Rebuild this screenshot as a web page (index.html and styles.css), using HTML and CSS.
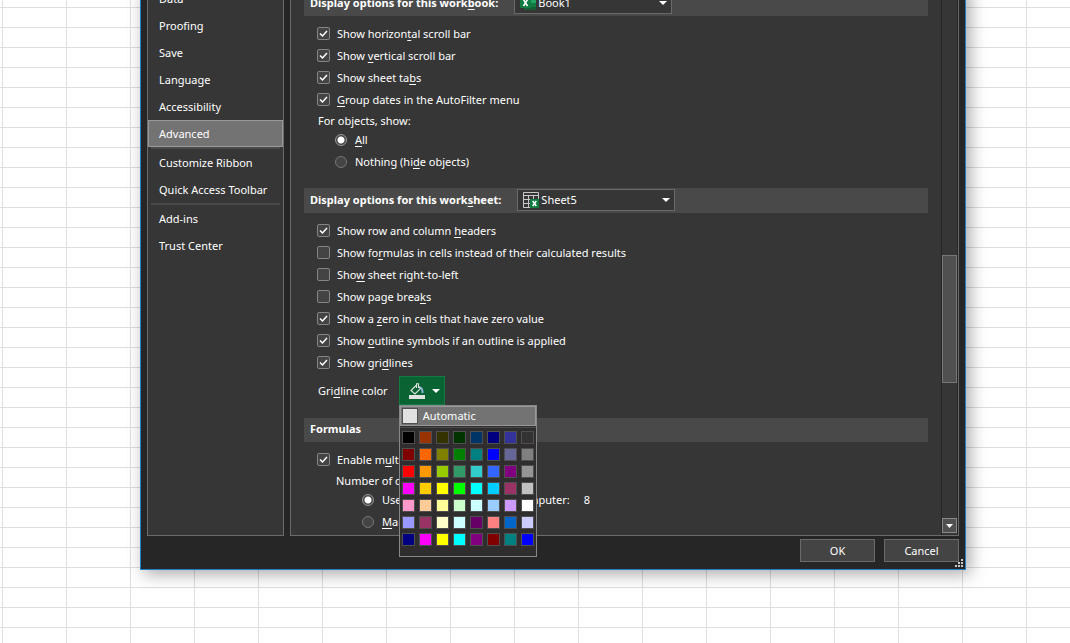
FILE: index.html
```
<!DOCTYPE html>
<html lang="en">
<head>
<meta charset="utf-8">
<title>Excel Options</title>
<link rel="stylesheet" href="styles.css">
</head>
<body class="sheet">
<div class="dialog" role="dialog" aria-label="Excel Options">
  <div class="panes">
    <nav class="nav" aria-label="Categories">
      <button class="nav-item" type="button">Data</button>
      <button class="nav-item" type="button">Proofing</button>
      <button class="nav-item" type="button">Save</button>
      <button class="nav-item" type="button">Language</button>
      <button class="nav-item" type="button">Accessibility</button>
      <button class="nav-item nav-item-active" type="button" aria-current="page">Advanced</button>
      <hr class="nav-line">
      <button class="nav-item" type="button">Customize Ribbon</button>
      <button class="nav-item" type="button">Quick Access Toolbar</button>
      <hr class="nav-line">
      <button class="nav-item" type="button">Add-ins</button>
      <button class="nav-item" type="button">Trust Center</button>
    </nav>

    <main class="pane">
      <div class="content">
        <section class="group">
          <div class="band">
            <label class="band-title" for="book">Display options for this work<u>b</u>ook:</label>
            <div class="picker">
              <select class="picker-select" id="book"><option>Book1</option></select>
              <svg class="picker-icon" width="16" height="16" viewBox="0 0 16 16" aria-hidden="true">
                <rect x="4" y="1" width="12" height="14" fill="#21a366"/>
                <rect x="10" y="8" width="6" height="4" fill="#107c41"/>
                <rect x="4" y="12" width="12" height="3" fill="#185c37"/>
                <rect x="0" y="2" width="11" height="11" fill="#107c41"/>
                <path d="M3.500 4.500L7.500 11M7.500 4.500L3.500 11" stroke="#fff" stroke-width="1.600"/>
              </svg>
              <svg class="picker-arrow" width="8" height="4" viewBox="0 0 8 4" aria-hidden="true"><path d="M0 0H8L4 4Z" fill="#fff"/></svg>
            </div>
          </div>
          <div class="rows">
            <label class="row"><input class="check" type="checkbox" checked><span>Show horizon<u>t</u>al scroll bar</span></label>
            <label class="row"><input class="check" type="checkbox" checked><span>Show <u>v</u>ertical scroll bar</span></label>
            <label class="row"><input class="check" type="checkbox" checked><span>Show sheet ta<u>b</u>s</span></label>
            <label class="row"><input class="check" type="checkbox" checked><span><u>G</u>roup dates in the AutoFilter menu</span></label>
            <div class="caption">For objects, show:</div>
            <label class="row row-radio"><input class="radio" type="radio" name="objects" checked><span><u>A</u>ll</span></label>
            <label class="row row-radio"><input class="radio" type="radio" name="objects"><span>Nothing (hi<u>d</u>e objects)</span></label>
          </div>
        </section>

        <section class="group">
          <div class="band">
            <label class="band-title" for="worksheet">Display options for this work<u>s</u>heet:</label>
            <div class="picker">
              <select class="picker-select" id="worksheet"><option>Sheet5</option></select>
              <svg class="picker-icon" width="16" height="16" viewBox="0 0 16 16" aria-hidden="true">
                <path d="M.5.5H15.500V7M7 15.500H.5V.5M0 3.500H16M0 7.500H7M0 11.500H7M5.500 3V16M10.500 3V7" fill="none" stroke="#c8c8c8"/>
                <rect x="7" y="7" width="9" height="9" fill="#107c41"/>
                <path d="M9.700 9L13.300 14M13.300 9L9.700 14" stroke="#fff" stroke-width="1.500"/>
              </svg>
              <svg class="picker-arrow" width="8" height="4" viewBox="0 0 8 4" aria-hidden="true"><path d="M0 0H8L4 4Z" fill="#fff"/></svg>
            </div>
          </div>
          <div class="rows">
            <label class="row"><input class="check" type="checkbox" checked><span>Show row and column <u>h</u>eaders</span></label>
            <label class="row"><input class="check" type="checkbox"><span>Show fo<u>r</u>mulas in cells instead of their calculated results</span></label>
            <label class="row"><input class="check" type="checkbox"><span>Sho<u>w</u> sheet right-to-left</span></label>
            <label class="row"><input class="check" type="checkbox"><span>Show page brea<u>k</u>s</span></label>
            <label class="row"><input class="check" type="checkbox" checked><span>Show a <u>z</u>ero in cells that have zero value</span></label>
            <label class="row"><input class="check" type="checkbox" checked><span>Show <u>o</u>utline symbols if an outline is applied</span></label>
            <label class="row"><input class="check" type="checkbox" checked><span>Show gri<u>d</u>lines</span></label>
          </div>
          <div class="color-row">
            <label class="color-label" for="color">Gri<u>d</u>line color</label>
            <div class="color-anchor">
              <button class="color-button" id="color" type="button" aria-expanded="true">
                <svg width="16" height="16" viewBox="0 0 16 16" aria-hidden="true">
                  <path d="M7.500 5V.8H9.500V5M7 2.500L2 7.500L6 11L11.500 5.500L9.500 3" fill="none" stroke="#e1e1e1" stroke-width="1.100"/>
                  <path d="M10.500 3.500Q14.800 3.500 14.500 10H12.500Q13 7 11.500 5.500Z" fill="#8fb8dc"/>
                  <rect x="0" y="12" width="16" height="4" fill="#e1e1e1"/>
                </svg>
                <svg width="8" height="4" viewBox="0 0 8 4" aria-hidden="true"><path d="M0 0H8L4 4Z" fill="#fff"/></svg>
              </button>
              <div class="popup">
                <button class="auto" type="button"><span class="auto-chip"></span>Automatic</button>
                <hr class="popup-line">
                <div class="swatches" id="swatches"></div>
              </div>
            </div>
          </div>
        </section>

        <section class="group">
          <h2 class="band band-short band-title">Formulas</h2>
          <div class="rows">
            <label class="row"><input class="check" type="checkbox" checked><span>Enable m<u>u</u>lti-threaded calculation</span></label>
            <div class="caption caption-inner">Number of calculation threads</div>
            <label class="row row-inner"><input class="radio" type="radio" name="threads" checked><span>Use all <u>p</u>rocessors on this computer:</span><span class="count">8</span></label>
            <label class="row row-inner"><input class="radio" type="radio" name="threads"><span><u>M</u>anual</span></label>
          </div>
        </section>
      </div>

      <div class="scroll">
        <div class="thumb"></div>
        <button class="scroll-down" type="button" aria-label="Scroll down"><svg width="7" height="4" viewBox="0 0 7 4" aria-hidden="true"><path d="M0 0H7L3.500 4Z" fill="#fff"/></svg></button>
      </div>
    </main>
  </div>

  <footer class="footer">
    <button class="push" type="button">OK</button>
    <button class="push" type="button">Cancel</button>
  </footer>
  <svg class="grip" width="8" height="8" viewBox="0 0 8 8" aria-hidden="true"><path d="M6 0h2v2h-2zM3 3h2v2h-2zM6 3h2v2h-2zM0 6h2v2h-2zM3 6h2v2h-2zM6 6h2v2h-2z" fill="#c8c8c8"/></svg>
</div>
<script src="swatches.js"></script>
</body>
</html>
```

FILE: swatches.js
```
const colors = [
  "#000000", "#993300", "#333300", "#003300", "#003366", "#000080", "#333399", "#333333",
  "#800000", "#ff6600", "#808000", "#008000", "#008080", "#0000ff", "#666699", "#808080",
  "#ff0000", "#ff9900", "#99cc00", "#339966", "#33cccc", "#3366ff", "#800080", "#969696",
  "#ff00ff", "#ffcc00", "#ffff00", "#00ff00", "#00ffff", "#00ccff", "#993366", "#c0c0c0",
  "#ff99cc", "#ffcc99", "#ffff99", "#ccffcc", "#ccffff", "#99ccff", "#cc99ff", "#ffffff",
  "#9999ff", "#993366", "#ffffcc", "#ccffff", "#660066", "#ff8080", "#0066cc", "#ccccff",
  "#000080", "#ff00ff", "#ffff00", "#00ffff", "#800080", "#800000", "#008080", "#0000ff"
];
const holder = document.getElementById("swatches");
for (const color of colors) {
  const swatch = document.createElement("button");
  swatch.type = "button";
  swatch.className = "swatch";
  swatch.style.backgroundColor = color;
  swatch.setAttribute("aria-label", color);
  holder.append(swatch);
}
```

FILE: styles.css
```
* { box-sizing: border-box; }

.sheet {
  margin: 0;
  height: 100vh;
  overflow: hidden;
  display: flex;
  align-items: flex-start;
  padding: 0 104px 0 140px;
  background-color: #fff;
  background-image:
    linear-gradient(to right, #dedede 1px, transparent 1px),
    linear-gradient(to bottom, #dedede 1px, transparent 1px);
  background-size: 64px 20px;
  background-position: 2px 7px;
  font: 11px/16px "Noto Sans", "Segoe UI", sans-serif;
  color: #fff;
}

button, select, input { font: inherit; color: inherit; margin: 0; }
u { text-underline-offset: 2px; }

/* The window runs off the top edge of the screen. */
.dialog {
  position: relative;
  flex: 1;
  margin-top: -15px;
  border: 1px solid #1e7fc9;
  border-top: 0;
  background: #262626;
  box-shadow: 4px 4px 16px rgba(0, 0, 0, .35);
}

.panes {
  display: flex;
  gap: 6px;
  padding: 0 6px;
}

.nav {
  flex: 0 0 137px;
  display: flex;
  flex-direction: column;
  background: #363636;
  border: 1px solid #6a6a6a;
  border-top: 0;
}
.nav-item {
  height: 27px;
  padding: 0 10px;
  border: 1px solid transparent;
  background: none;
  text-align: left;
  white-space: nowrap;
}
.nav-item-active {
  background: #737373;
  border-color: #999;
}
.nav-line {
  height: 2px;
  margin: 0 3px;
  border: 0;
  background: #4a4a4a;
}

.pane {
  flex: 1;
  display: flex;
  background: #363636;
  border: 1px solid #6a6a6a;
  border-top: 0;
}
.content {
  flex: 1;
  display: flex;
  flex-direction: column;
  gap: 13px;
  padding: 6px 13px 0;
}

.band {
  display: flex;
  align-items: center;
  gap: 16px;
  height: 25px;
  margin: 0 0 7px;
  padding: 0 6px 1px;
  background: #494949;
}
.band-short { height: 24px; padding-bottom: 2px; }
.band-title { font-size: 11px; font-weight: 700; }

.picker { position: relative; }
.picker-select {
  display: block;
  width: 158px;
  height: 22px;
  padding: 0 20px 1px 23px;
  border: 1px solid #6a6a6a;
  border-radius: 0;
  background: #363636;
  appearance: none;
}
.picker-icon { position: absolute; left: 6px; top: 3px; }
.picker-arrow { position: absolute; right: 5px; top: 9px; }

.rows { padding: 0 0 2px 13px; }
.row {
  display: flex;
  align-items: center;
  gap: 7px;
  height: 22px;
}
.row-radio { padding-left: 18px; gap: 8px; }
.row-inner { padding-left: 45px; gap: 8px; }
.caption { height: 18px; line-height: 20px; padding-left: 1px; }
.caption-inner { padding-left: 19px; }
.count { margin-left: 6px; }

.check, .radio {
  appearance: none;
  width: 13px;
  height: 13px;
  margin-bottom: 1px;
  border: 1px solid #858585;
  border-radius: 2px;
  background: #444;
}
.check:checked {
  background: #444 url("data:image/svg+xml,%3Csvg xmlns='http://www.w3.org/2000/svg' viewBox='0 0 11 11'%3E%3Cpath d='M2 5.500L4.500 8L9 3' fill='none' stroke='white' stroke-width='1.500'/%3E%3C/svg%3E");
}
.radio {
  width: 12px;
  height: 12px;
  border-radius: 50%;
  border-color: #777;
}
.radio:checked {
  border-color: #999;
  background: radial-gradient(circle, #fff 3px, #444 4px);
}

.color-row {
  display: flex;
  align-items: center;
  gap: 11px;
  padding-left: 14px;
}
.color-anchor { position: relative; }
.color-button {
  display: flex;
  align-items: center;
  gap: 7px;
  width: 46px;
  height: 29px;
  padding: 0 0 0 9px;
  border: 1px solid #107c41;
  background: #0a6332;
}

.popup {
  position: absolute;
  left: 0;
  top: 100%;
  z-index: 1;
  width: 138px;
  height: 152px;
  border: 1px solid #85888c;
  background: #2f2d2d;
}
.auto {
  display: flex;
  align-items: center;
  gap: 5px;
  width: 100%;
  height: 20px;
  padding: 0 1px;
  border: 1px solid #999;
  background: #737373;
}
.auto-chip {
  width: 16px;
  height: 16px;
  border: 1px solid #4f4f4f;
  background: #e1e1e1;
}
.popup-line {
  height: 1px;
  margin: 1px 0 3px;
  border: 0;
  background: #4a4a4a;
}
.swatches {
  display: grid;
  grid-template-columns: repeat(8, 13px);
  gap: 4px;
  padding-left: 2px;
}
.swatch {
  height: 13px;
  padding: 0;
  border: 1px solid #4f4f4f;
}

.scroll {
  display: flex;
  flex-direction: column;
  justify-content: space-between;
  width: 17px;
  padding: 270px 0 2px;
  border: 1px solid #262626;
  border-width: 0 1px;
}
.thumb {
  height: 128px;
  background: #505050;
  border: 1px solid #777;
}
.scroll-down {
  display: grid;
  place-items: center;
  height: 15px;
  padding: 0;
  border: 1px solid #8a8a8a;
  background: #505050;
}

.footer {
  display: flex;
  justify-content: flex-end;
  gap: 9px;
  padding: 3px 6px 7px;
}
.push {
  width: 75px;
  height: 23px;
  padding: 0;
  border: 1px solid #6a6a6a;
  background: #444;
}
.grip { position: absolute; right: 2px; bottom: 2px; }
```
